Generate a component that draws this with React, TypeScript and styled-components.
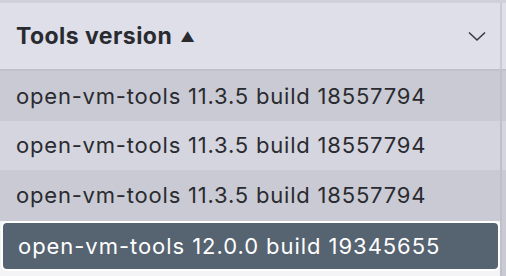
import React from "react";
import styled, { createGlobalStyle } from "styled-components";

const GlobalStyle = createGlobalStyle`
  html, body {
    margin: 0;
    padding: 0;
    background: #f4f4f6;
  }
  body {
    font-family: Inter, "Noto Sans", sans-serif;
    color: #2a2b30;
  }
`;

const Grid = styled.div`
  width: 506px;
  height: 276px;
  overflow: hidden;
  display: grid;
  grid-template-columns: 500px 2px 4px;
  grid-template-rows: 3px 66px 2px repeat(3, 49.5px) auto;
  background: #f4f4f6;
`;

const TopStrip = styled.div`
  grid-column: 1 / -1;
  background: #cfd0d9;
`;

const HeaderCell = styled.div`
  display: flex;
  align-items: center;
  padding: 0 14px 0 16px;
  background: #dedfe8;
  font-size: 23px;
  font-weight: 700;
  letter-spacing: 0.45px;
`;

const SortArrow = styled.span`
  font-size: 14px;
  margin-left: 8px;
  margin-top: 1px;
`;

const Spacer = styled.div`
  flex: 1;
`;

const Divider = styled.div<{ $bg: string }>`
  background: ${(p) => p.$bg};
`;

const HeaderRule = styled.div`
  grid-column: 1 / -1;
  background: #bfc1cb;
`;

const Row = styled.div<{ $shade: string }>`
  display: flex;
  align-items: center;
  padding-left: 16px;
  background: ${(p) => p.$shade};
  font-size: 22px;
  letter-spacing: 0.8px;
  white-space: nowrap;
`;

const SelectedWrap = styled.div`
  grid-column: 1 / 2;
  padding: 1px 0 3px 1px;
  background: linear-gradient(#c9cad3, #c9cad3) top / 100% 1px no-repeat, #f4f4f6;
`;

const SelectedRow = styled.div`
  height: 50px;
  box-sizing: border-box;
  display: flex;
  align-items: center;
  padding-left: 15px;
  background: #566370;
  border: 2px solid #ffffff;
  border-radius: 6px;
  color: #ffffff;
  font-size: 22px;
  letter-spacing: 0.95px;
  white-space: nowrap;
`;

const Chevron = () => (
  <svg width="18" height="11" viewBox="0 0 18 11" fill="none">
    <path d="M1 1.5 L9 9 L17 1.5" stroke="#3a3b40" strokeWidth="1.6" />
  </svg>
);

const rows = [
  { text: "open-vm-tools 11.3.5 build 18557794", shade: "#c9cad3" },
  { text: "open-vm-tools 11.3.5 build 18557794", shade: "#d4d5de" },
  { text: "open-vm-tools 11.3.5 build 18557794", shade: "#c9cad3" },
];

export default function App() {
  return (
    <>
      <GlobalStyle />
      <Grid>
        <TopStrip />
        <HeaderCell>
          Tools version
          <SortArrow>▲</SortArrow>
          <Spacer />
          <Chevron />
        </HeaderCell>
        <Divider $bg="#c9cad4" />
        <Divider $bg="#dedfe8" />
        <HeaderRule />
        {rows.map((r, i) => (
          <React.Fragment key={i}>
            <Row $shade={r.shade}>{r.text}</Row>
            <Divider $bg="#bfc0c9" />
            <Divider $bg={r.shade} />
          </React.Fragment>
        ))}
        <SelectedWrap>
          <SelectedRow>open-vm-tools 12.0.0 build 19345655</SelectedRow>
        </SelectedWrap>
        <Divider $bg="#bfc0c9" />
        <Divider $bg="#c9cad3" />
      </Grid>
    </>
  );
}
